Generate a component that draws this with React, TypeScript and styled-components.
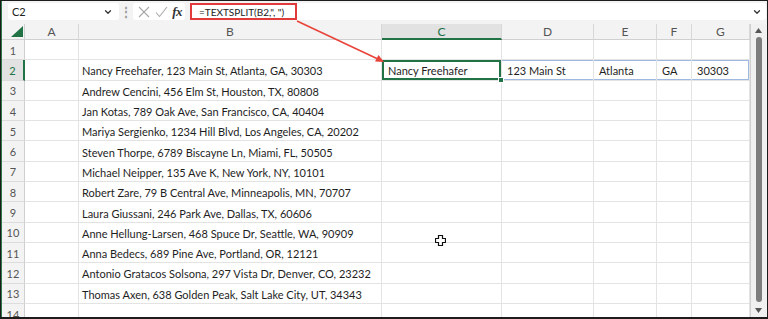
import React from 'react';
import styled, { createGlobalStyle, css } from 'styled-components';
import { ChevronDown } from 'lucide-react';

const rows: string[] = [
  '',
  'Nancy Freehafer, 123 Main St, Atlanta, GA, 30303',
  'Andrew Cencini, 456 Elm St, Houston, TX, 80808',
  'Jan Kotas, 789 Oak Ave, San Francisco, CA, 40404',
  'Mariya Sergienko, 1234 Hill Blvd, Los Angeles, CA, 20202',
  'Steven Thorpe, 6789 Biscayne Ln, Miami, FL, 50505',
  'Michael Neipper, 135 Ave K, New York, NY, 10101',
  'Robert Zare, 79 B Central Ave, Minneapolis, MN, 70707',
  'Laura Giussani, 246 Park Ave, Dallas, TX, 60606',
  'Anne Hellung-Larsen, 468 Spuce Dr, Seattle, WA, 90909',
  'Anna Bedecs, 689 Pine Ave, Portland, OR, 12121',
  'Antonio Gratacos Solsona, 297 Vista Dr, Denver, CO, 23232',
  'Thomas Axen, 638 Golden Peak, Salt Lake City, UT, 34343',
  '',
];

const columns = ['A', 'B', 'C', 'D', 'E', 'F', 'G'];
const spill = ['Nancy Freehafer', '123 Main St', 'Atlanta', 'GA', '30303'];

const App: React.FC = () => {
  return (
    <>
      <GlobalStyle />
      <Frame>
        <FormulaBar>
          <NameBox>
            C2
            <ChevronDown size={10} strokeWidth={3} color='#333' />
          </NameBox>
          <Dots>⋮</Dots>
          <ActionBox>
            <svg width='12' height='12' viewBox='0 0 12 12'>
              <path d='M1 1 L11 11 M11 1 L1 11' stroke='#a8a8a8' strokeWidth='1.1' fill='none' />
            </svg>
            <svg width='13' height='12' viewBox='0 0 13 12'>
              <path d='M1 6.5 L4.5 10.5 L12 1' stroke='#a8a8a8' strokeWidth='1.1' fill='none' />
            </svg>
            <Fx>fx</Fx>
          </ActionBox>
          <FormulaInput>
            <FormulaText>=TEXTSPLIT(B2,", ")</FormulaText>
            <ChevronDown size={10} strokeWidth={3} color='#333' />
          </FormulaInput>
        </FormulaBar>

        <Sheet>
          <Grid>
            <Corner>
              <svg width='12' height='11' viewBox='0 0 12 11'>
                <path d='M0 11 L12 11 L12 0 Z' fill='#217346' />
              </svg>
            </Corner>
            {columns.map((c) => (
              <ColHeader key={c} $active={c === 'C'}>
                {c}
              </ColHeader>
            ))}

            {rows.map((text, i) => {
              const r = i + 1;
              const isTwo = r === 2;
              return (
                <React.Fragment key={r}>
                  <RowHeader $active={isTwo}>{r}</RowHeader>
                  <Cell />
                  <Cell $pad={3}>{text}</Cell>
                  {isTwo ? (
                    <>
                      <ActiveCell>
                        {spill[0]}
                        <FillHandle />
                      </ActiveCell>
                      {spill.slice(1).map((v, k) => (
                        <Cell key={v} $pad={5} $spill $spillEnd={k === 3}>
                          {v}
                        </Cell>
                      ))}
                    </>
                  ) : (
                    <>
                      <Cell />
                      <Cell />
                      <Cell />
                      <Cell />
                      <Cell />
                    </>
                  )}
                </React.Fragment>
              );
            })}
          </Grid>

          <Scrollbar>
            <ScrollArrow viewBox='0 0 7 5'>
              <path d='M0 5 L3.5 0 L7 5 Z' fill='#555' />
            </ScrollArrow>
            <Thumb />
            <ScrollArrow viewBox='0 0 7 5'>
              <path d='M0 0 L3.5 5 L7 0 Z' fill='#555' />
            </ScrollArrow>
          </Scrollbar>
        </Sheet>

        <ArrowOverlay width='768' height='319' viewBox='0 0 768 319'>
          <line x1='297' y1='21' x2='380' y2='60' stroke='#e8443a' strokeWidth='1.6' />
          <path d='M384 62 L375 61.5 L378.5 55 Z' fill='#e8443a' />
        </ArrowOverlay>

        <CellCursor width='11' height='11' viewBox='0 0 11 11'>
          <path
            d='M3.5 0.5 H7.5 V3.5 H10.5 V7.5 H7.5 V10.5 H3.5 V7.5 H0.5 V3.5 H3.5 Z'
            fill='#fff'
            stroke='#111'
            strokeWidth='1.2'
          />
        </CellCursor>
      </Frame>
    </>
  );
};

export default App;

const GlobalStyle = createGlobalStyle`
  body {
    margin: 0;
    background: #ffffff;
    font-family: Lato, 'Liberation Sans', sans-serif;
  }
`;

const Frame = styled.div`
  position: relative;
  width: 768px;
  height: 319px;
  box-sizing: border-box;
  border: 1px solid #1c1c1c;
  border-bottom-width: 2px;
  box-shadow: inset 1px 0 0 #2f7a4c;
  background: #f3f3f3;
  overflow: hidden;
  display: flex;
  flex-direction: column;
`;

const FormulaBar = styled.div`
  height: 17px;
  margin: 2px 1px 0 7px;
  display: flex;
  align-items: stretch;
`;

const whiteBox = css`
  background: #ffffff;
  border-radius: 3px;
  display: flex;
  align-items: center;
`;

const NameBox = styled.div`
  ${whiteBox};
  width: 111px;
  box-sizing: border-box;
  padding: 0 6px 0 4px;
  justify-content: space-between;
  font-size: 11px;
  color: #222;
`;

const Dots = styled.div`
  width: 14px;
  display: flex;
  align-items: center;
  justify-content: center;
  color: #9a9a9a;
  font-size: 12px;
  font-weight: bold;
`;

const ActionBox = styled.div`
  ${whiteBox};
  width: 52px;
  margin-right: 5px;
  box-sizing: border-box;
  padding: 0 3px 0 5px;
  justify-content: space-between;
`;

const Fx = styled.span`
  font-family: 'Liberation Serif', serif;
  font-style: italic;
  font-weight: bold;
  font-size: 13px;
  color: #333;
  letter-spacing: -0.5px;
`;

const FormulaInput = styled.div`
  ${whiteBox};
  flex: 1;
  justify-content: space-between;
  padding-right: 4px;
`;

const FormulaText = styled.span`
  align-self: stretch;
  display: flex;
  align-items: center;
  width: 107px;
  box-sizing: border-box;
  padding-left: 7px;
  border: 2px solid #e03a3a;
  font-size: 10px;
  color: #222;
  white-space: nowrap;
`;

const Sheet = styled.div`
  margin-top: 4px;
  flex: 1;
  display: flex;
  padding-left: 1px;
  min-height: 0;
`;

const Grid = styled.div`
  display: grid;
  grid-template-columns: 23px 54px 303px 120px 92px 63px 35px 58px;
  grid-template-rows: 16px;
  grid-auto-rows: 20.3px;
  background: #ffffff;
  border-right: 1px solid #d0d0d0;
  overflow: hidden;
  align-content: start;
`;

const Corner = styled.div`
  background: #f3f3f3;
  border-bottom: 1px solid #d0d0d0;
  border-right: 1px solid #d0d0d0;
  display: flex;
  align-items: flex-end;
  justify-content: flex-end;
  padding: 0 1px 2px 0;
`;

const ColHeader = styled.div<{ $active?: boolean }>`
  background: ${(p) => (p.$active ? '#e2e2e2' : '#f3f3f3')};
  border-right: 1px solid #d8d8d8;
  border-bottom: ${(p) => (p.$active ? '2px solid #217346' : '1px solid #d0d0d0')};
  color: ${(p) => (p.$active ? '#217346' : '#555')};
  font-size: 12px;
  display: flex;
  align-items: center;
  justify-content: center;
`;

const RowHeader = styled.div<{ $active?: boolean }>`
  background: ${(p) => (p.$active ? '#e2e2e2' : '#f3f3f3')};
  border-bottom: 1px solid #dcdcdc;
  border-right: ${(p) => (p.$active ? '2px solid #217346' : '1px solid #d0d0d0')};
  color: ${(p) => (p.$active ? '#217346' : '#555')};
  font-size: 11px;
  display: flex;
  align-items: center;
  justify-content: center;
  padding-top: 1px;
`;

const Cell = styled.div<{ $pad?: number; $spill?: boolean; $spillEnd?: boolean }>`
  position: relative;
  border-right: 1px solid #e3e3e3;
  border-bottom: 1px solid #e3e3e3;
  padding-left: ${(p) => p.$pad ?? 3}px;
  padding-top: 2px;
  font-size: 11px;
  color: #1e1e1e;
  white-space: nowrap;
  display: flex;
  align-items: center;
  ${(p) =>
    p.$spill &&
    css`
      box-shadow: inset 0 1px 0 #9fb8e2, inset 0 -1px 0 #9fb8e2
        ${p.$spillEnd ? ', inset -1px 0 0 #9fb8e2' : ''};
    `}
`;

const ActiveCell = styled(Cell)`
  padding-left: 6px;
  box-shadow: inset 0 0 0 2px #217346;
`;

const FillHandle = styled.span`
  position: absolute;
  right: -3px;
  bottom: -3px;
  width: 4px;
  height: 4px;
  background: #217346;
  border: 1px solid #ffffff;
  z-index: 1;
`;

const Scrollbar = styled.div`
  width: 15px;
  background: #f0f0f0;
  display: flex;
  flex-direction: column;
  align-items: center;
  padding: 4px 0 4px;
  gap: 4px;
  box-sizing: border-box;
`;

const ScrollArrow = styled.svg`
  width: 7px;
  height: 5px;
  flex: none;
`;

const Thumb = styled.div`
  flex: 1;
  width: 6px;
  border-radius: 3px;
  background: #7d7d7d;
  margin-bottom: 2px;
`;

const ArrowOverlay = styled.svg`
  position: absolute;
  left: -1px;
  top: -1px;
  pointer-events: none;
`;

const CellCursor = styled.svg`
  position: absolute;
  left: 434px;
  top: 234px;
  pointer-events: none;
`;
